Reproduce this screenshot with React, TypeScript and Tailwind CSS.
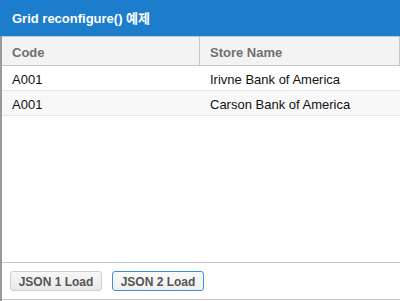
const rows = [
  { code: "A001", name: "Irivne Bank of America" },
  { code: "A001", name: "Carson Bank of America" },
];

export default function App() {
  return (
    <div className="w-[400px] h-[301px] flex flex-col bg-white font-['Liberation_Sans','Noto_Sans_CJK_KR',sans-serif] text-[13px]">
      <div className="h-[36px] shrink-0 bg-[#1b7dcb] text-white font-bold text-[13px] flex items-center px-[12px] pt-[1px]">
        Grid reconfigure() 예제
      </div>
      <div className="flex-1 flex flex-col border-l-2 border-[#9a9a9a]">
        <div className="flex-1 flex flex-col">
          <div className="h-[30px] flex bg-[#f3f3f3] border border-l-0 border-[#c6c6c6] text-[#707070] font-bold">
            <div className="w-[198px] border-r border-[#c6c6c6] flex items-center px-[10px] pt-[3px]">Code</div>
            <div className="flex-1 flex items-center px-[10px] pt-[3px]">Store Name</div>
          </div>
          {rows.map((r, i) => (
            <div
              key={i}
              className={`h-[25px] flex border-b border-[#e6e6e6] text-[#111] ${i % 2 ? "bg-[#f8f8f8]" : "bg-white"}`}
            >
              <div className="w-[198px] flex items-center px-[10px] pt-[3px]">{r.code}</div>
              <div className="flex-1 flex items-center px-[10px] pt-[3px]">{r.name}</div>
            </div>
          ))}
        </div>
        <div className="h-[38px] shrink-0 border-t border-b border-[#c6c6c6] flex items-center gap-[10px] px-[8px] mb-[1px]">
          <button className="w-[92px] h-[20px] pt-[1px] rounded-[3px] border border-[#d0d0d0] bg-gradient-to-b from-[#f7f7f7] to-[#e9e9e9] text-[#555] font-bold text-[12px]">
            JSON 1 Load
          </button>
          <button className="w-[92px] h-[20px] pt-[1px] rounded-[3px] border border-[#3d90e0] bg-gradient-to-b from-[#fafafa] to-[#efefef] text-[#555] font-bold text-[12px]">
            JSON 2 Load
          </button>
        </div>
      </div>
    </div>
  );
}
